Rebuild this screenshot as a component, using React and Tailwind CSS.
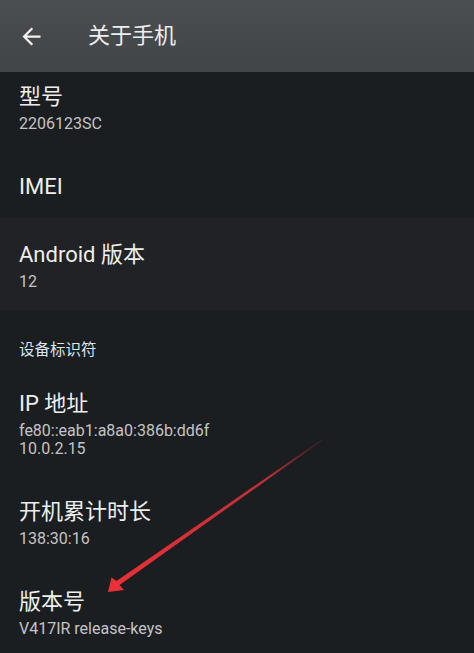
const font = { fontFamily: 'Roboto, "Noto Sans CJK SC", sans-serif' };

const Item = ({ title, lines = [], className = "" }) => (
	<div className={`px-[19px] ${className}`}>
		<div className="text-[22px] leading-[30px] text-[#eeeeee]">{title}</div>
		{lines.length > 0 && (
			<div className="mt-[3px]">
				{lines.map((line) => (
					<div key={line} className="text-[16px] leading-[18px] text-[#c4c4c4]">
						{line}
					</div>
				))}
			</div>
		)}
	</div>
);

const RedArrow = () => (
	<svg
		className="absolute left-0 top-0 pointer-events-none"
		width="474"
		height="653"
		viewBox="0 0 474 653">
		<defs>
			<linearGradient id="fade" x1="322" y1="440" x2="108" y2="592" gradientUnits="userSpaceOnUse">
				<stop offset="0" stopColor="#e8333a" stopOpacity="0.15" />
				<stop offset="0.25" stopColor="#e8333a" stopOpacity="0.8" />
				<stop offset="1" stopColor="#ee3038" />
			</linearGradient>
		</defs>
		<polygon
			fill="url(#fade)"
			points="321.5,439.7 116.5,581 111.5,577.5 108,592 124,590 119.5,585 322.5,440.3"
		/>
	</svg>
);

export default function App() {
	return (
		<div className="relative w-[474px] h-[653px] overflow-hidden bg-[#1b1e21]" style={font}>
			<div className="h-[72px] flex items-center pl-[18px] bg-gradient-to-b from-[#4b4e51] to-[#424548]">
				<svg width="27" height="27" viewBox="0 0 24 24" fill="#f2f2f2">
					<path d="M20 11H7.83l5.59-5.59L12 4l-8 8 8 8 1.41-1.41L7.83 13H20v-2z" />
				</svg>
				<span className="ml-[43px] text-[22px] text-[#eeeeee] leading-[30px]">关于手机</span>
			</div>
			<Item title="型号" lines={["2206123SC"]} className="pt-[10px] pb-[18px]" />
			<Item title="IMEI" className="pt-[21px] pb-[16px]" />
			<Item title="Android 版本" lines={["12"]} className="pt-[22px] pb-[19px] bg-[#202225]" />
			<div className="px-[19px] pt-[30px] pb-[8px] text-[15.5px] leading-[20px] text-[#dbe3ec]">
				设备标识符
			</div>
			<Item
				title="IP 地址"
				lines={["fe80::eab1:a8a0:386b:dd6f", "10.0.2.15"]}
				className="pt-[21px] pb-[18px]"
			/>
			<Item title="开机累计时长" lines={["138:30:16"]} className="pt-[21px] pb-[18px]" />
			<Item title="版本号" lines={["V417IR release-keys"]} className="pt-[21px] pb-[18px]" />
			<RedArrow />
		</div>
	);
}
